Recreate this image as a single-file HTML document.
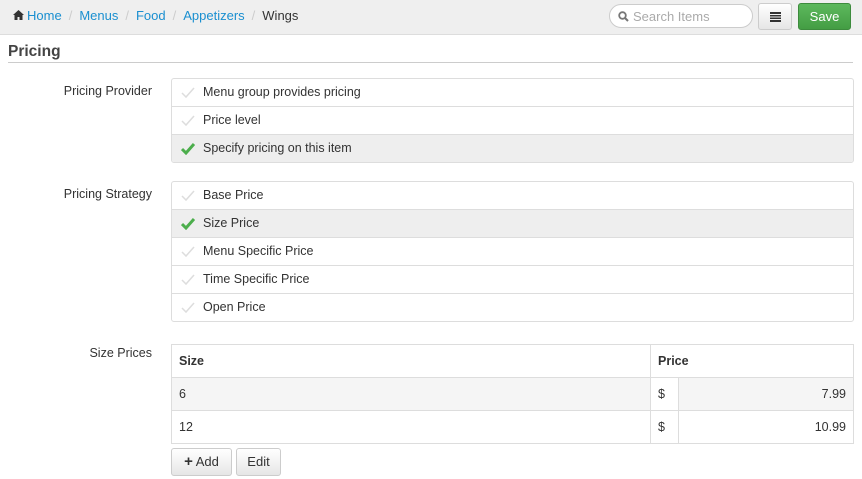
<!DOCTYPE html><html><head><style>
*{box-sizing:border-box;margin:0;padding:0}
body{width:862px;height:479px;overflow:hidden;background:#fff;font-family:"Liberation Sans",sans-serif;font-size:12.5px;color:#333;position:relative}
.top{position:absolute;left:0;top:0;width:862px;height:35px;background:#efefef;border-bottom:1px solid #ddd}
.bc{position:absolute;left:13px;top:8px;font-size:13px}
.bc a{color:#1a8fd0;text-decoration:none}
.bc .s{color:#ccc;margin:0 7px}
.search{position:absolute;left:609px;top:4px;width:144px;height:24px;border:1px solid #ccc;border-radius:12px;background:#fff;color:#aaa;font-size:13px;padding:4px 0 0 23px}
.btn{position:absolute;border:1px solid #ccc;border-radius:3px;background:linear-gradient(#fff,#e6e6e6);font-size:13px;text-align:center}
.save{position:absolute;left:798px;top:3px;width:53px;height:27px;border-radius:3px;background:linear-gradient(#5cb85c,#449d44);border:1px solid #3d8b3d;color:#fff;font-size:13px;text-align:center;line-height:25px}
h2{position:absolute;left:8px;top:43px;font-size:15.5px;font-weight:bold;color:#444}
.hr{position:absolute;left:8px;top:62px;width:845px;border-top:1px solid #ccc}
.lbl{position:absolute;right:710px;font-size:12.5px;color:#333}
.list{position:absolute;left:171px;width:683px;border:1px solid #ddd;border-radius:3px;overflow:hidden}
.list div{height:28px;line-height:27px;border-top:1px solid #ddd;padding-left:31px;position:relative}
.list div:first-child{border-top:0;height:27px}
.list div.on{background:#eee}
.ck{position:absolute;left:9px;top:8px}
table{position:absolute;left:171px;top:344px;width:683px;border-collapse:collapse;border:1px solid #ddd}
td{border:1px solid #ddd;height:33px;padding:0 7px;font-size:12.5px}
</style></head><body>
<div class="top">
<div class="bc"><svg width="11" height="10" viewBox="0 0 11 10" style="margin-right:3px"><path d="M5.5 0L0 5h1.5v5h3V7h2v3h3V5H11z" fill="#333"/></svg><a>Home</a><span class="s">/</span><a>Menus</a><span class="s">/</span><a>Food</a><span class="s">/</span><a>Appetizers</a><span class="s">/</span>Wings</div>
<div class="search"><svg width="11" height="11" viewBox="0 0 11 11" style="position:absolute;left:8px;top:6px"><circle cx="4.5" cy="4.5" r="3.3" stroke="#777" stroke-width="1.8" fill="none"/><path d="M7 7l3 3" stroke="#777" stroke-width="2"/></svg>Search Items</div>
<div class="btn" style="left:758px;top:3px;width:34px;height:27px"><svg width="11" height="10" viewBox="0 0 11 10" style="margin-top:8px"><path d="M0 0h11v2H0zM0 3h11v1.5H0zM0 5.5h11v1.5H0zM0 8h11v2H0z" fill="#333"/></svg></div>
<div class="save">Save</div>
</div>
<h2>Pricing</h2><div class="hr"></div>
<div class="lbl" style="top:84px">Pricing Provider</div>
<div class="list" style="top:78px">
<div><svg class="ck" width="14" height="12"><path d="M1 6l4 4 8-9" stroke="#ddd" stroke-width="1.5" fill="none"/></svg>Menu group provides pricing</div>
<div><svg class="ck" width="14" height="12"><path d="M1 6l4 4 8-9" stroke="#ddd" stroke-width="1.5" fill="none"/></svg>Price level</div>
<div class="on"><svg class="ck" width="14" height="12"><path d="M1 6l4 4 8-9" stroke="#4cae4c" stroke-width="3" fill="none"/></svg>Specify pricing on this item</div>
</div>
<div class="lbl" style="top:187px">Pricing Strategy</div>
<div class="list" style="top:181px">
<div><svg class="ck" width="14" height="12"><path d="M1 6l4 4 8-9" stroke="#ddd" stroke-width="1.5" fill="none"/></svg>Base Price</div>
<div class="on"><svg class="ck" width="14" height="12"><path d="M1 6l4 4 8-9" stroke="#4cae4c" stroke-width="3" fill="none"/></svg>Size Price</div>
<div><svg class="ck" width="14" height="12"><path d="M1 6l4 4 8-9" stroke="#ddd" stroke-width="1.5" fill="none"/></svg>Menu Specific Price</div>
<div><svg class="ck" width="14" height="12"><path d="M1 6l4 4 8-9" stroke="#ddd" stroke-width="1.5" fill="none"/></svg>Time Specific Price</div>
<div><svg class="ck" width="14" height="12"><path d="M1 6l4 4 8-9" stroke="#ddd" stroke-width="1.5" fill="none"/></svg>Open Price</div>
</div>
<div class="lbl" style="top:346px">Size Prices</div>
<table>
<tr><td style="font-weight:bold;width:479px;height:32px">Size</td><td colspan="2" style="font-weight:bold">Price</td></tr>
<tr style="background:#f5f5f5"><td>6</td><td style="width:28px;background:#fff">$</td><td style="text-align:right">7.99</td></tr>
<tr><td>12</td><td style="width:28px">$</td><td style="text-align:right">10.99</td></tr>
</table>
<div class="btn" style="left:171px;top:448px;width:61px;height:28px;line-height:26px"><b style="font-size:15px">+</b> Add</div>
<div class="btn" style="left:236px;top:448px;width:45px;height:28px;line-height:26px">Edit</div>
</body></html>
